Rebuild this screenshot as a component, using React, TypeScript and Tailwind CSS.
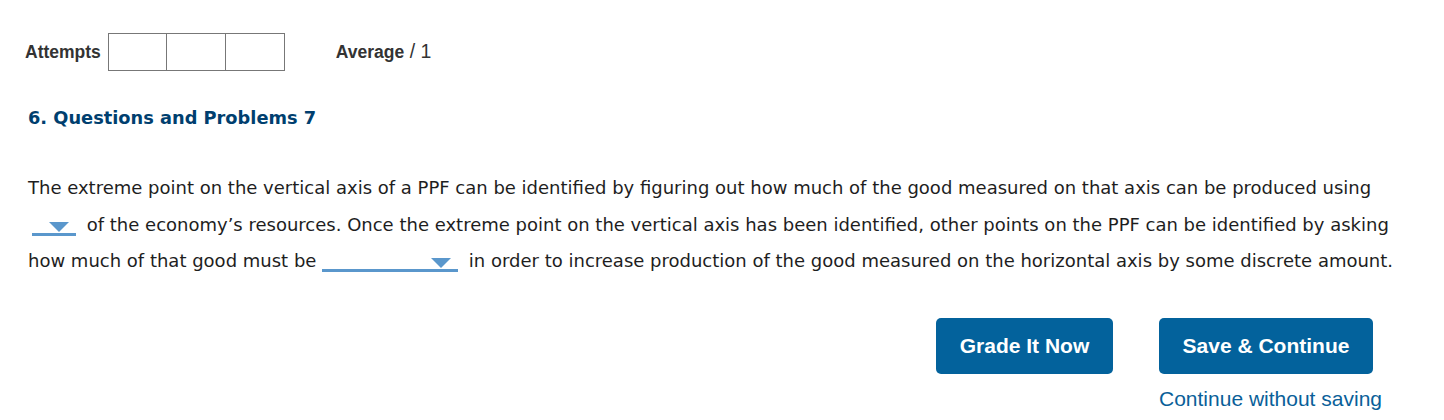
import React from "react";

function Dropdown({ className }: { className: string }) {
  return (
    <span
      className={
        "relative inline-block align-[-5px] border-b-[3px] border-[#5a97cc] h-[20px] mr-[5px] " +
        className
      }
    >
      <svg
        className="absolute right-[7px] top-[6px]"
        width="20"
        height="10"
        viewBox="0 0 20 10"
      >
        <polygon points="0,0 20,0 10,10" fill="#5a97cc" />
      </svg>
    </span>
  );
}

export default function App() {
  return (
    <div className="w-[1444px] h-[420px] bg-white relative overflow-hidden">
      <div className="flex items-center pl-[25px] pt-[33px]">
        <span className="[font-family:'Liberation_Sans',Arial,sans-serif] font-bold text-[17.5px] text-[#333] mr-[7px]">
          Attempts
        </span>
        <div className="flex">
          <div className="w-[59px] h-[38px] border border-[#777]" />
          <div className="w-[59px] h-[38px] border border-[#777] border-l-0" />
          <div className="w-[59px] h-[38px] border border-[#777] border-l-0" />
        </div>
        <span className="ml-[51px] [font-family:'Liberation_Sans',Arial,sans-serif] text-[19.5px] text-[#333]">
          <span className="font-bold text-[17.5px]">Average</span> / 1
        </span>
      </div>

      <h2 className="mt-[33px] pl-[28px] [font-family:'DejaVu_Sans',Verdana,sans-serif] font-bold text-[17.8px] leading-[27px] text-[#003f6f]">
        6. Questions and Problems 7
      </h2>

      <p className="mt-[39px] pl-[28px] w-[1414px] [font-family:'DejaVu_Sans',Verdana,sans-serif] text-[18px] leading-[36.5px] text-[#1e1e1e]">
        The extreme point on the vertical axis of a PPF can be identified by figuring out how much of the good measured on that axis can be produced using{" "}
        <Dropdown className="w-[44px] ml-[4px]" /> of the economy’s resources. Once the extreme point on the vertical axis has been identified, other points on the PPF can be identified by asking how much of that good must be{" "}
        <Dropdown className="w-[136px] ml-0" /> in order to increase production of the good measured on the horizontal axis by some discrete amount.
      </p>

      <div className="flex justify-end pr-[62px] mt-[38px]">
        <div className="flex items-start gap-[46px]">
          <button className="w-[177px] h-[56px] rounded-[5px] bg-[#03629c] text-white [font-family:'Liberation_Sans',Arial,sans-serif] font-bold text-[21px]">
            Grade It Now
          </button>
          <div className="flex flex-col items-start">
            <button className="w-[214px] h-[56px] rounded-[5px] bg-[#03629c] text-white [font-family:'Liberation_Sans',Arial,sans-serif] font-bold text-[21px]">
              Save &amp; Continue
            </button>
            <a className="mt-[13px] [font-family:'Liberation_Sans',Arial,sans-serif] text-[21px] text-[#0a5f99] leading-[24px]">
              Continue without saving
            </a>
          </div>
        </div>
      </div>
    </div>
  );
}
